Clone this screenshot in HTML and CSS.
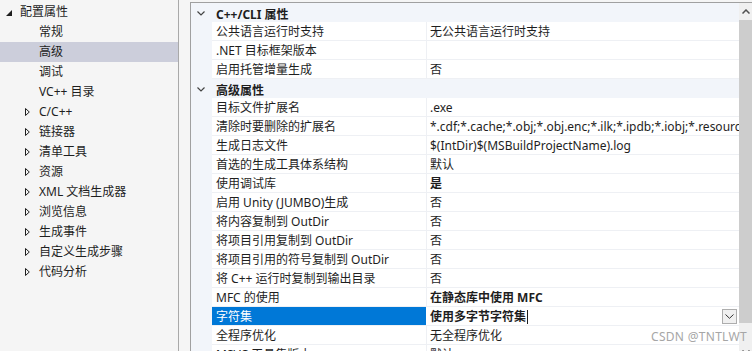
FILE: index.html
```html
<!DOCTYPE html>
<html lang="zh-CN">
<head>
    <meta charset="UTF-8">
    <title>属性页</title>
    <link rel="stylesheet" href="styles.css">
</head>
<body>
    <div id="tree">
        <div class="node top"><svg class="tri" width="6" height="6" viewBox="0 0 6 6"><polygon points="6,0 6,6 0,6" fill="#1e1e1e"/></svg><span>配置属性</span></div>
        <div class="node child">常规</div>
        <div class="node child sel">高级</div>
        <div class="node child">调试</div>
        <div class="node child">VC++ 目录</div>
        <div class="node child closed"><svg class="arr" width="5" height="8" viewBox="0 0 5 8"><polygon points="0.5,0.5 4.3,4 0.5,7.5" fill="none" stroke="#1e1e1e"/></svg><span>C/C++</span></div>
        <div class="node child closed"><svg class="arr" width="5" height="8" viewBox="0 0 5 8"><polygon points="0.5,0.5 4.3,4 0.5,7.5" fill="none" stroke="#1e1e1e"/></svg><span>链接器</span></div>
        <div class="node child closed"><svg class="arr" width="5" height="8" viewBox="0 0 5 8"><polygon points="0.5,0.5 4.3,4 0.5,7.5" fill="none" stroke="#1e1e1e"/></svg><span>清单工具</span></div>
        <div class="node child closed"><svg class="arr" width="5" height="8" viewBox="0 0 5 8"><polygon points="0.5,0.5 4.3,4 0.5,7.5" fill="none" stroke="#1e1e1e"/></svg><span>资源</span></div>
        <div class="node child closed"><svg class="arr" width="5" height="8" viewBox="0 0 5 8"><polygon points="0.5,0.5 4.3,4 0.5,7.5" fill="none" stroke="#1e1e1e"/></svg><span>XML 文档生成器</span></div>
        <div class="node child closed"><svg class="arr" width="5" height="8" viewBox="0 0 5 8"><polygon points="0.5,0.5 4.3,4 0.5,7.5" fill="none" stroke="#1e1e1e"/></svg><span>浏览信息</span></div>
        <div class="node child closed"><svg class="arr" width="5" height="8" viewBox="0 0 5 8"><polygon points="0.5,0.5 4.3,4 0.5,7.5" fill="none" stroke="#1e1e1e"/></svg><span>生成事件</span></div>
        <div class="node child closed"><svg class="arr" width="5" height="8" viewBox="0 0 5 8"><polygon points="0.5,0.5 4.3,4 0.5,7.5" fill="none" stroke="#1e1e1e"/></svg><span>自定义生成步骤</span></div>
        <div class="node child closed"><svg class="arr" width="5" height="8" viewBox="0 0 5 8"><polygon points="0.5,0.5 4.3,4 0.5,7.5" fill="none" stroke="#1e1e1e"/></svg><span>代码分析</span></div>
    </div>

    <div id="grid">
        <div id="props">
            <div class="cat"><svg class="chev" width="8" height="5" viewBox="0 0 8 5"><polyline points="0.5,0.5 4,4 7.5,0.5" fill="none" stroke="#444" stroke-width="1.2"/></svg><span>C++/CLI 属性</span></div>
            <div class="row"><span class="name">公共语言运行时支持</span><span class="val">无公共语言运行时支持</span></div>
            <div class="row"><span class="name">.NET 目标框架版本</span><span class="val"></span></div>
            <div class="row"><span class="name">启用托管增量生成</span><span class="val">否</span></div>

            <div class="cat"><svg class="chev" width="8" height="5" viewBox="0 0 8 5"><polyline points="0.5,0.5 4,4 7.5,0.5" fill="none" stroke="#444" stroke-width="1.2"/></svg><span>高级属性</span></div>
            <div class="row"><span class="name">目标文件扩展名</span><span class="val">.exe</span></div>
            <div class="row"><span class="name">清除时要删除的扩展名</span><span class="val">*.cdf;*.cache;*.obj;*.obj.enc;*.ilk;*.ipdb;*.iobj;*.resources;*.tlb;*.tli;*.tlh;*.tmp</span></div>
            <div class="row"><span class="name">生成日志文件</span><span class="val">$(IntDir)$(MSBuildProjectName).log</span></div>
            <div class="row"><span class="name">首选的生成工具体系结构</span><span class="val">默认</span></div>
            <div class="row"><span class="name">使用调试库</span><span class="val bold">是</span></div>
            <div class="row"><span class="name">启用 Unity (JUMBO)生成</span><span class="val">否</span></div>
            <div class="row"><span class="name">将内容复制到 OutDir</span><span class="val">否</span></div>
            <div class="row"><span class="name">将项目引用复制到 OutDir</span><span class="val">否</span></div>
            <div class="row"><span class="name">将项目引用的符号复制到 OutDir</span><span class="val">否</span></div>
            <div class="row"><span class="name">将 C++ 运行时复制到输出目录</span><span class="val">否</span></div>
            <div class="row"><span class="name">MFC 的使用</span><span class="val bold">在静态库中使用 MFC</span></div>
            <div class="row active">
                <span class="name">字符集</span>
                <span class="val bold edit"><span class="txt">使用多字节字符集</span><span class="caret"></span>
                    <span class="drop"><svg width="9" height="5" viewBox="0 0 9 5"><polyline points="0.5,0.5 4.5,4.3 8.5,0.5" fill="none" stroke="#333" stroke-width="1"/></svg></span>
                </span>
            </div>
            <div class="row"><span class="name">全程序优化</span><span class="val">无全程序优化</span></div>
            <div class="row"><span class="name">MSVC 工具集版本</span><span class="val">默认</span></div>
        </div>

        <div id="scroll">
            <div class="sbtn"><svg width="8" height="5" viewBox="0 0 8 5"><polyline points="0.5,4.5 4,1 7.5,4.5" fill="none" stroke="#505050" stroke-width="1.5"/></svg></div>
            <div class="thumb"></div>
            <div class="track"></div>
            <div class="sbtn down"><svg width="8" height="5" viewBox="0 0 8 5"><polyline points="0.5,0.5 4,4 7.5,0.5" fill="none" stroke="#505050" stroke-width="1.5"/></svg></div>
        </div>

        <div class="mark">CSDN @TNTLWT</div>
    </div>
</body>
</html>
```

FILE: styles.css
```css
*{
    margin: 0;
    padding: 0;
    box-sizing: border-box;
}

body{
    width: 752px;
    height: 351px;
    overflow: hidden;
    background: #f5f5f5;
    color: #1e1e1e;
    font-family: 'Segoe UI', 'Noto Sans', 'Noto Sans CJK SC', sans-serif;
    font-size: 12px;
    display: flex;
    align-items: flex-start;
    gap: 11px;
}

/* tree on the left */
#tree{
    width: 179px;
    height: 351px;
    flex-shrink: 0;
    padding-top: 2px;
    border-right: 1px solid #a9a9a9;
}
#tree .node{
    height: 20px;
    line-height: 20px;
    display: flex;
    align-items: center;
    white-space: nowrap;
}
#tree .top{
    padding-left: 6px;
}
#tree .top .tri{
    margin-right: 8px;
    margin-top: 1px;
}
#tree .child{
    padding-left: 39px;
}
#tree .child.closed{
    padding-left: 25px;
}
#tree .closed .arr{
    margin-right: 9px;
}
#tree .sel{
    background: #cccedb;
}

/* property grid */
#grid{
    position: relative;
    flex: 1;
    margin-top: 2px;
    height: 360px;
    border-top: 1px solid #a0a0a0;
    border-left: 1px solid #a0a0a0;
    display: flex;
    background: #f2f5fa;
}
#props{
    flex: 1;
    min-width: 0;
}
#props .cat{
    height: 19px;
    padding-top: 2px;
    display: flex;
    align-items: center;
    font-weight: bold;
    background: #f2f5fa;
}
#props .cat .chev{
    margin-left: 6px;
    margin-right: 11px;
    margin-bottom: 1px;
}
#props .row{
    height: 19px;
    margin-left: 21px;
    display: grid;
    grid-template-columns: 214px 1fr;
    background: #fff;
    border-bottom: 1px solid #eef0f4;
}
#props .row span.name,
#props .row span.val{
    height: 18px;
    line-height: 20px;
    white-space: nowrap;
    overflow: hidden;
}
#props .name{
    padding-left: 4px;
}
#props .val{
    padding-left: 3px;
    border-left: 1px solid #eef0f4;
}
#props .bold{
    font-weight: bold;
}

#props .row.active .name{
    background: #0078d7;
    color: #fff;
}
#props .row.active .val{
    border-left: 2px solid #fff;
    display: flex;
    align-items: center;
    padding-left: 2px;
}
#props .edit .txt{
    padding-top: 2px;
}
#props .edit .caret{
    width: 1px;
    height: 14px;
    background: #1e1e1e;
    margin-left: 1px;
    margin-top: 1px;
}
#props .edit .drop{
    margin-left: auto;
    margin-right: 2px;
    width: 15px;
    height: 15px;
    border: 1px solid #adadad;
    background: #f0f0f0;
    display: flex;
    align-items: center;
    justify-content: center;
}

/* scrollbar */
#scroll{
    width: 13px;
    flex-shrink: 0;
    display: flex;
    flex-direction: column;
    background: #f0f0f0;
}
#scroll .sbtn{
    height: 17px;
    display: flex;
    align-items: center;
    justify-content: center;
}
#scroll .sbtn.down{
    align-items: flex-start;
    padding-top: 5px;
}
#scroll .thumb{
    height: 303px;
    background: #cdcdcd;
}
#scroll .track{
    flex: 1;
}

.mark{
    position: absolute;
    left: 460px;
    top: 325px;
    color: #a6a6a6;
    font-family: 'Segoe UI', 'Noto Sans', sans-serif;
    font-size: 12px;
    letter-spacing: 0.3px;
}
```
